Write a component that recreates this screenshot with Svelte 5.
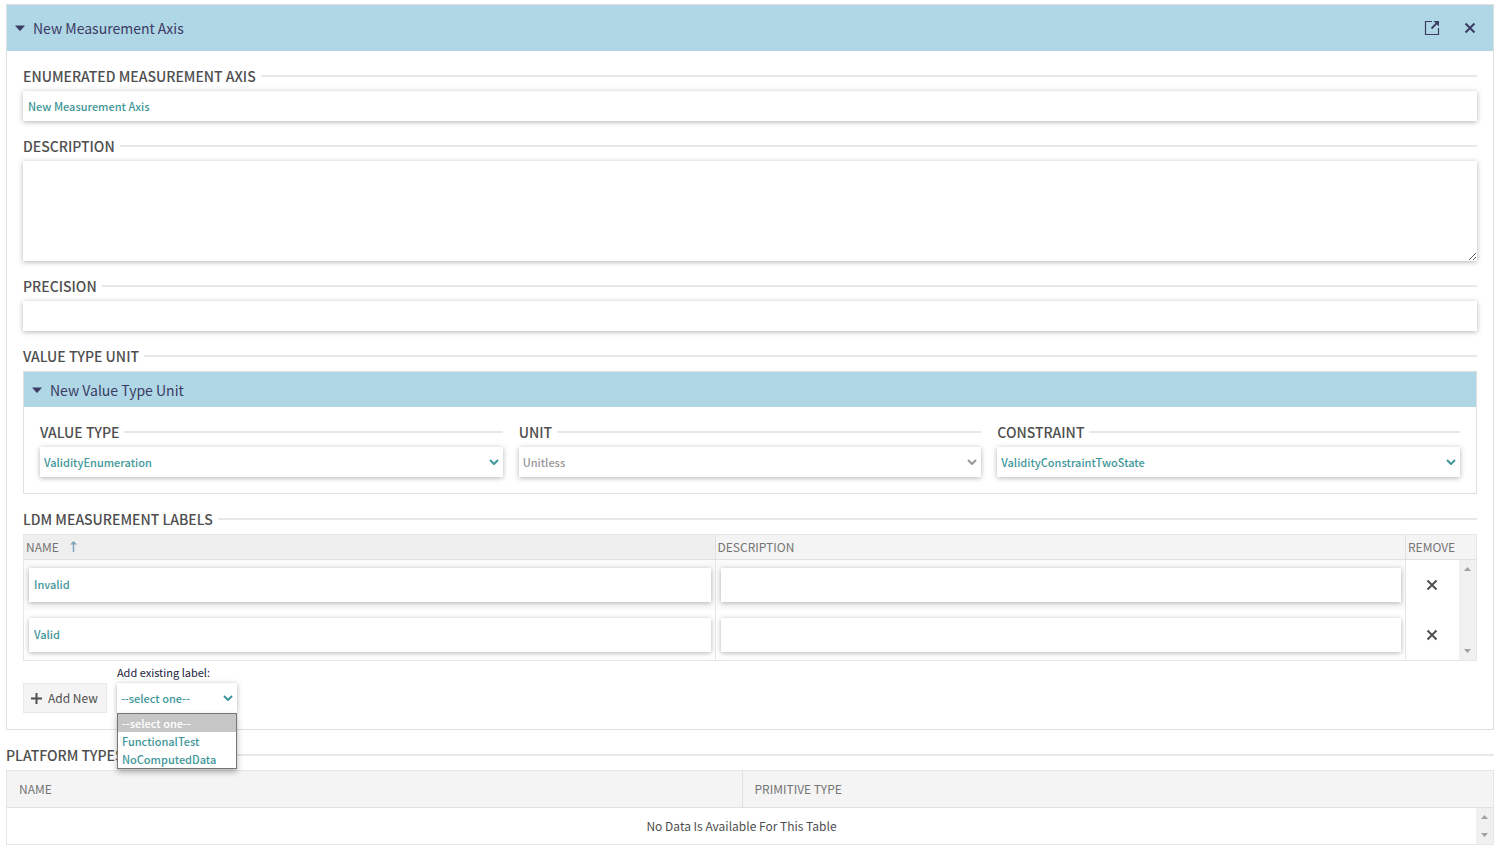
<script>
  let axisName = $state('New Measurement Axis');
  let description = $state('');
  let precision = $state('');

  let axisOpen = $state(true);
  let unitOpen = $state(true);
  let menuOpen = $state(true);
  let chosen = $state('');

  const unitFields = [
    { id: 'value-type', label: 'Value Type', value: 'ValidityEnumeration', disabled: false },
    { id: 'unit', label: 'Unit', value: 'Unitless', disabled: true },
    { id: 'constraint', label: 'Constraint', value: 'ValidityConstraintTwoState', disabled: false },
  ];

  let labels = $state([
    { name: 'Invalid', description: '' },
    { name: 'Valid', description: '' },
  ]);

  const existing = [
    { value: '', text: '--select one--' },
    { value: 'FunctionalTest', text: 'FunctionalTest' },
    { value: 'NoComputedData', text: 'NoComputedData' },
  ];

  function addLabel() {
    labels.push({ name: '', description: '' });
  }

  function removeLabel(idx) {
    labels.splice(idx, 1);
  }

  function pick(value) {
    chosen = value;
    menuOpen = false;
  }

  function toggleMenu(e) {
    e.preventDefault();
    menuOpen = !menuOpen;
  }
</script>

{#snippet caret()}
  <svg class="caret" width="10" height="6" viewBox="0 0 10 6" aria-hidden="true">
    <path d="M0 0.500h10L5.600 5.400q-.6.5-1.200 0z" fill="currentColor" />
  </svg>
{/snippet}

{#snippet cross()}
  <svg width="12" height="12" viewBox="0 0 12 12" aria-hidden="true">
    <path d="M1.500 1.500l9 9M10.500 1.500l-9 9" stroke="currentColor" stroke-width="2" />
  </svg>
{/snippet}

{#snippet chevron()}
  <svg class="chevron" width="10" height="6" viewBox="0 0 10 6" aria-hidden="true">
    <path d="M1 1l4 4 4-4" fill="none" stroke="currentColor" stroke-width="2" />
  </svg>
{/snippet}

{#snippet scrollbar()}
  <div class="scrollbar" aria-hidden="true">
    <svg width="7" height="4" viewBox="0 0 7 4"><path d="M0 4L3.500 0 7 4z" fill="#a0a0a0" /></svg>
    <svg width="7" height="4" viewBox="0 0 7 4"><path d="M0 0L3.500 4 7 0z" fill="#a0a0a0" /></svg>
  </div>
{/snippet}

<main>
  <section class="card">
    <header class="card-head">
      <button class="toggle" aria-expanded={axisOpen} onclick={() => (axisOpen = !axisOpen)}>
        {@render caret()}
        <span>New Measurement Axis</span>
      </button>
      <button class="icon-btn" aria-label="Open in new window">
        <svg width="16" height="16" viewBox="0 0 16 16" aria-hidden="true">
          <path d="M8 1.500H1.500v13h13V8" fill="none" stroke="currentColor" stroke-width="1.200" />
          <path d="M7.500 8.500l5-5" stroke="currentColor" stroke-width="1.800" />
          <path d="M9.500 1H15v5.500z" fill="currentColor" />
        </svg>
      </button>
      <button class="icon-btn" aria-label="Close">{@render cross()}</button>
    </header>

    {#if axisOpen}
      <div class="card-body">
        <div class="field">
          <label class="legend" for="axis-name">Enumerated Measurement Axis</label>
          <input class="box" id="axis-name" type="text" bind:value={axisName} />
        </div>
        <div class="field">
          <label class="legend" for="description">Description</label>
          <textarea class="box" id="description" bind:value={description}></textarea>
        </div>
        <div class="field">
          <label class="legend" for="precision">Precision</label>
          <input class="box" id="precision" type="text" bind:value={precision} />
        </div>

        <div class="field">
          <h2 class="legend">Value Type Unit</h2>
          <section class="card">
            <header class="card-head small">
              <button class="toggle" aria-expanded={unitOpen} onclick={() => (unitOpen = !unitOpen)}>
                {@render caret()}
                <span>New Value Type Unit</span>
              </button>
            </header>
            {#if unitOpen}
              <div class="card-body columns">
                {#each unitFields as f}
                  <div class="field">
                    <label class="legend" for={f.id}>{f.label}</label>
                    <div class="select" class:disabled={f.disabled}>
                      <select class="box" id={f.id} disabled={f.disabled}>
                        <option>{f.value}</option>
                      </select>
                      {@render chevron()}
                    </div>
                  </div>
                {/each}
              </div>
            {/if}
          </section>
        </div>

        <div class="field">
          <h2 class="legend">LDM Measurement Labels</h2>
          <table class="labels">
            <colgroup>
              <col /><col /><col class="col-remove" /><col class="col-scroll" />
            </colgroup>
            <thead>
              <tr>
                <th class="sorted" aria-sort="ascending">
                  Name
                  <svg width="9" height="12" viewBox="0 0 9 12" aria-hidden="true">
                    <path d="M4.500 2v10" stroke="currentColor" stroke-width="1.500" />
                    <path d="M1 4.500L4.500 1 8 4.500z" fill="currentColor" />
                  </svg>
                </th>
                <th>Description</th>
                <th colspan="2">Remove</th>
              </tr>
            </thead>
            <tbody>
              {#each labels as row, i}
                <tr>
                  <td><input class="box" type="text" aria-label="Name" bind:value={row.name} /></td>
                  <td><input class="box" type="text" aria-label="Description" bind:value={row.description} /></td>
                  <td class="remove">
                    <button class="icon-btn" aria-label="Remove label" onclick={() => removeLabel(i)}>{@render cross()}</button>
                  </td>
                  {#if i === 0}
                    <td class="scroll-cell" rowspan={labels.length}>{@render scrollbar()}</td>
                  {/if}
                </tr>
              {/each}
            </tbody>
          </table>
        </div>

        <div class="actions">
          <button class="add" onclick={addLabel}>
            <svg width="11" height="11" viewBox="0 0 11 11" aria-hidden="true">
              <path d="M5.500 0v11M0 5.500h11" stroke="currentColor" stroke-width="2" />
            </svg>
            Add New
          </button>
          <div class="existing">
            <label for="existing">Add existing label:</label>
            <div class="select">
              <select class="box" id="existing" bind:value={chosen} onmousedown={toggleMenu}>
                {#each existing as o}
                  <option value={o.value}>{o.text}</option>
                {/each}
              </select>
              {@render chevron()}
            </div>
            {#if menuOpen}
              <div class="menu">
                {#each existing as o}
                  <button class:active={o.value === chosen} onclick={() => pick(o.value)}>{o.text}</button>
                {/each}
              </div>
            {/if}
          </div>
        </div>
      </div>
    {/if}
  </section>

  <section class="field platform">
    <h2 class="legend">Platform Types</h2>
    <table class="types">
      <colgroup>
        <col /><col /><col class="col-scroll" />
      </colgroup>
      <thead>
        <tr>
          <th>Name</th>
          <th colspan="2">Primitive Type</th>
        </tr>
      </thead>
      <tbody>
        <tr>
          <td class="empty" colspan="2">No Data Is Available For This Table</td>
          <td class="scroll-cell">{@render scrollbar()}</td>
        </tr>
      </tbody>
    </table>
  </section>
</main>

<style>
:global(body) {
  background: #fff;
}
main {
  --line: #e0e0e0;
  --teal: #3f979a;
  --navy: #3b3b64;
  --text: #4f4f4f;
  padding: 4px 6px 8px;
  font-family: "Noto Sans CJK SC", "Noto Sans", sans-serif;
  font-size: 12px;
  line-height: 18px;
  color: var(--text);
}
main *, main *::before, main *::after {
  box-sizing: border-box;
}
button, input, select, textarea {
  margin: 0;
  font: inherit;
  color: inherit;
}
button {
  padding: 0;
  border: 0;
  background: none;
  cursor: pointer;
}
svg {
  display: block;
  flex: none;
}

/* cards */
.card {
  border: 1px solid var(--line);
}
.card-head {
  display: flex;
  align-items: center;
  gap: 10px;
  height: 46px;
  padding: 0 9px 0 8px;
  background: #b0d7e5;
  color: var(--navy);
}
.card-head.small {
  height: 35px;
}
.toggle {
  display: flex;
  flex: 1;
  align-items: center;
  gap: 8px;
  font-size: 14px;
  line-height: 22px;
}
.icon-btn {
  display: grid;
  place-items: center;
  width: 28px;
  height: 28px;
}
.card-body {
  padding: 10px 16px 16px;
}

/* fields */
.field + .field {
  margin-top: 10px;
}
.legend {
  display: flex;
  align-items: center;
  gap: 5px;
  height: 30px;
  margin: 0;
  font-size: 14px;
  font-weight: 500;
  text-transform: uppercase;
  white-space: nowrap;
}
.legend::after {
  content: "";
  flex: 1;
  height: 2px;
  background: #e8e8e8;
}
.box {
  display: block;
  width: 100%;
  height: 30px;
  padding: 0 5px 1px;
  border: 0;
  border-radius: 0;
  outline: 0;
  background: #fff;
  color: var(--teal);
  font-size: 11px;
  font-weight: 500;
  box-shadow: 0 1px 5px rgba(0, 0, 0, 0.3);
}
textarea.box {
  height: 100px;
  resize: vertical;
}
.columns {
  display: grid;
  grid-template-columns: repeat(3, 1fr);
  gap: 16px;
}
.columns .field {
  margin: 0;
}
.select {
  display: grid;
  align-items: center;
  color: var(--teal);
}
.select > :global(*) {
  grid-area: 1 / 1;
}
.select select {
  appearance: none;
  padding: 0 4px;
}
.select .chevron {
  justify-self: end;
  margin-right: 4px;
  pointer-events: none;
}
.select.disabled, .select.disabled select {
  color: #979797;
  opacity: 1;
}

/* tables */
table {
  width: 100%;
  table-layout: fixed;
  border-collapse: separate;
  border-spacing: 0;
  border: 1px solid #e6e6e6;
}
th, td {
  padding: 0;
}
th {
  background: #f4f4f4;
  border-bottom: 1px solid #e0e0e0;
  color: #757575;
  font-size: 12px;
  font-weight: 400;
  text-align: left;
  text-transform: uppercase;
}
th + th {
  border-left: 1px solid #e0e0e0;
}
th svg {
  display: inline-block;
  margin-left: 8px;
  color: #7fa3b8;
}
.col-remove {
  width: 54px;
}
.col-scroll {
  width: 17px;
}
.labels th {
  height: 25px;
  padding: 0 2px;
}
.labels th.sorted {
  background: #efefef;
}
.labels td {
  height: 50px;
  padding: 0 4px 0 5px;
}
.labels td + td {
  border-left: 1px solid #e6e6e6;
}
.labels tbody tr:nth-child(odd) {
  background: #fafafa;
}
.labels .box {
  height: 34px;
  padding-bottom: 3px;
}
.labels td.remove {
  padding: 0 12px;
  background: #fff;
}
.labels .scroll-cell, .types .scroll-cell {
  height: 36px;
  padding: 0;
  border: 0;
  background: #f0f0f0;
}
.scrollbar {
  display: flex;
  flex-direction: column;
  align-items: center;
  justify-content: space-between;
  height: 100%;
  padding: 7px 0;
}
.types th {
  height: 37px;
  padding: 0 12px;
}
.empty {
  text-align: center;
}

/* actions */
.actions {
  display: flex;
  align-items: flex-end;
  gap: 10px;
  margin-top: 2px;
}
.add {
  display: flex;
  align-items: center;
  gap: 6px;
  height: 30px;
  padding: 0 8px 0 7px;
  border: 1px solid #e8e8e8;
  background: #f4f4f4;
  font-size: 12px;
}
.existing {
  position: relative;
  width: 120px;
}
.existing label {
  display: block;
  height: 20px;
  font-size: 11px;
  color: #20243c;
}
.menu {
  position: absolute;
  top: 100%;
  left: 0;
  right: 0;
  z-index: 2;
  border: 1px solid #767676;
  background: #fff;
  box-shadow: 0 3px 6px rgba(0, 0, 0, 0.3);
}
.menu button {
  display: block;
  width: 100%;
  height: 18px;
  padding: 0 4px;
  color: var(--teal);
  font-size: 11px;
  font-weight: 500;
  text-align: left;
}
.menu button.active {
  background: #c6c6c6;
  color: #fff;
}
.platform {
  margin-top: 10px;
}
</style>
